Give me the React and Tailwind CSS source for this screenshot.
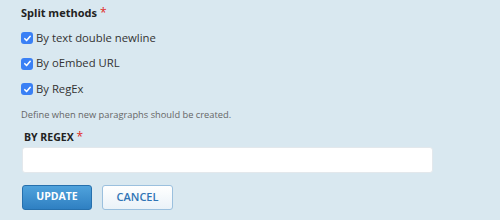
import React from "react";

const Check = ({ label }) => (
  <label className="flex items-center h-[25.5px]">
    <span className="w-[12px] h-[12px] rounded-[3px] bg-[#3a80f5] flex items-center justify-center">
      <svg width="9" height="9" viewBox="0 0 10 10" fill="none">
        <path d="M2 5.2l2 2.1L8 2.6" stroke="white" strokeWidth="1.7" strokeLinecap="round" strokeLinejoin="round" />
      </svg>
    </span>
    <span className="text-[11.3px] text-[#333] ml-[3px]">{label}</span>
  </label>
);

export default function App() {
  return (
    <div className="w-[500px] h-[220px] bg-[#d9e8f0] pl-[21px] pt-[3px] font-['Open_Sans',sans-serif] overflow-hidden">
      <div className="text-[11px] font-bold text-[#222] h-[20px] flex items-center">
        Split methods <span className="text-[#e0281f] ml-[3px] font-normal text-[12px]">*</span>
      </div>
      <div className="mt-[2.5px] flex flex-col">
        <Check label="By text double newline" />
        <Check label="By oEmbed URL" />
        <Check label="By RegEx" />
      </div>
      <p className="mt-[5px] h-[15px] leading-[15px] text-[9.3px] text-[#666]">Define when new paragraphs should be created.</p>
      <div className="mt-[6.5px] ml-[3px] h-[16px] leading-[16px] text-[10.5px] font-bold text-[#222]">
        BY REGEX <span className="text-[#e0281f] font-normal text-[12px]">*</span>
      </div>
      <input className="mt-[2px] ml-[1px] block w-[411px] h-[26px] bg-white rounded-[3px] border border-[#e3e8ec]" />
      <div className="mt-[12px] ml-[1px] flex gap-[10px]">
        <button className="w-[70px] h-[25px] rounded-[3px] border border-[#2670ad] bg-gradient-to-b from-[#4fa2dc] to-[#2f80c2] text-white text-[10.5px] font-bold">
          UPDATE
        </button>
        <button className="w-[71px] h-[25px] rounded-[3px] border border-[#9bc0de] bg-gradient-to-b from-white to-[#eaf2f8] text-[#2f74b5] text-[11px] font-semibold">
          CANCEL
        </button>
      </div>
    </div>
  );
}
